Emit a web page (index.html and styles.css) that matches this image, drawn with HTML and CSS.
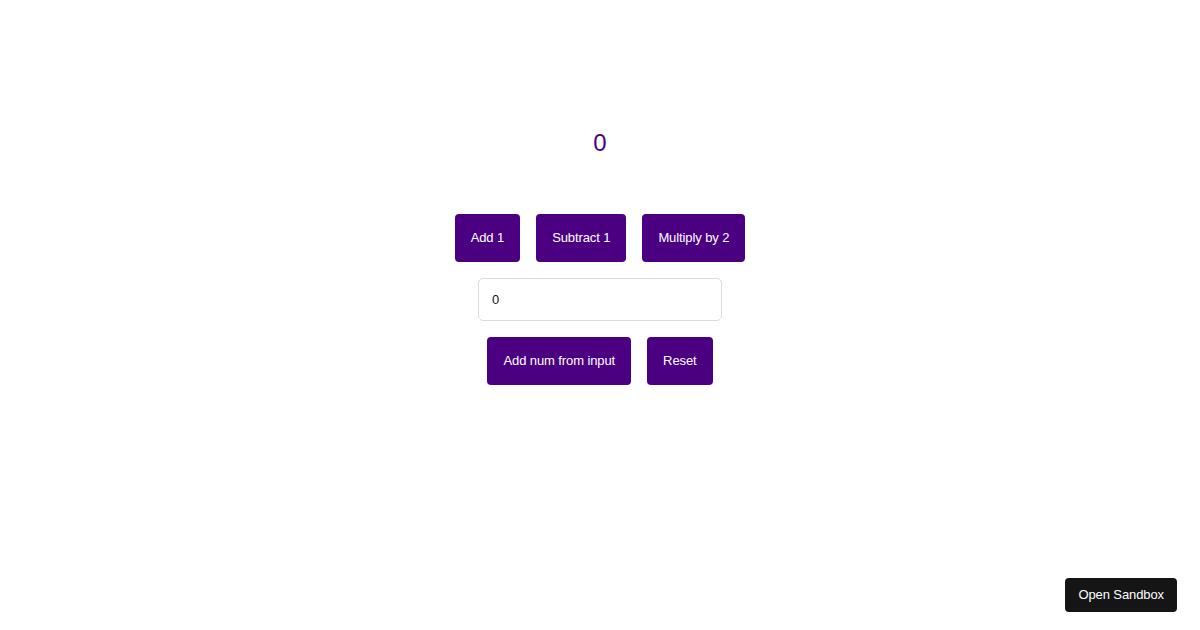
FILE: index.html
```html
<!DOCTYPE html>
<html>
<head>
<meta charset="utf-8">
<link rel="stylesheet" href="styles.css">
</head>
<body>
<div class="app">
  <div class="count">0</div>
  <div class="row">
    <button class="btn">Add 1</button>
    <button class="btn">Subtract 1</button>
    <button class="btn">Multiply by 2</button>
  </div>
  <input class="num" type="text" value="0">
  <div class="row">
    <button class="btn">Add num from input</button>
    <button class="btn">Reset</button>
  </div>
</div>
<a class="sandbox">Open Sandbox</a>
</body>
</html>
```
FILE: styles.css
```css
html, body {
  margin: 0;
  padding: 0;
  background: #fff;
  font-family: "Liberation Sans", Arial, sans-serif;
}
.app {
  display: flex;
  flex-direction: column;
  align-items: center;
  gap: 16px;
  padding-top: 127px;
}
.count {
  font-size: 24px;
  line-height: 32px;
  color: #4b0082;
  margin-bottom: 39px;
}
.row {
  display: flex;
  gap: 16px;
}
.btn {
  background: #4b0082;
  color: #fff;
  border: none;
  border-radius: 4px;
  font-family: "Liberation Sans", Arial, sans-serif;
  font-size: 13px;
  line-height: 16px;
  padding: 16px 16px;
  letter-spacing: -0.1px;
}
.num {
  box-sizing: border-box;
  width: 244px;
  height: 43px;
  border: 1px solid #dcdcdc;
  border-radius: 5px;
  padding: 0 13px;
  font-family: "Liberation Sans", Arial, sans-serif;
  font-size: 13px;
  color: #111;
  outline: none;
}
.sandbox {
  position: fixed;
  right: 23px;
  bottom: 18px;
  background: #151515;
  color: #fff;
  font-size: 13px;
  line-height: 16px;
  padding: 9px 13px;
  border-radius: 4px;
  letter-spacing: -0.1px;
}
```
